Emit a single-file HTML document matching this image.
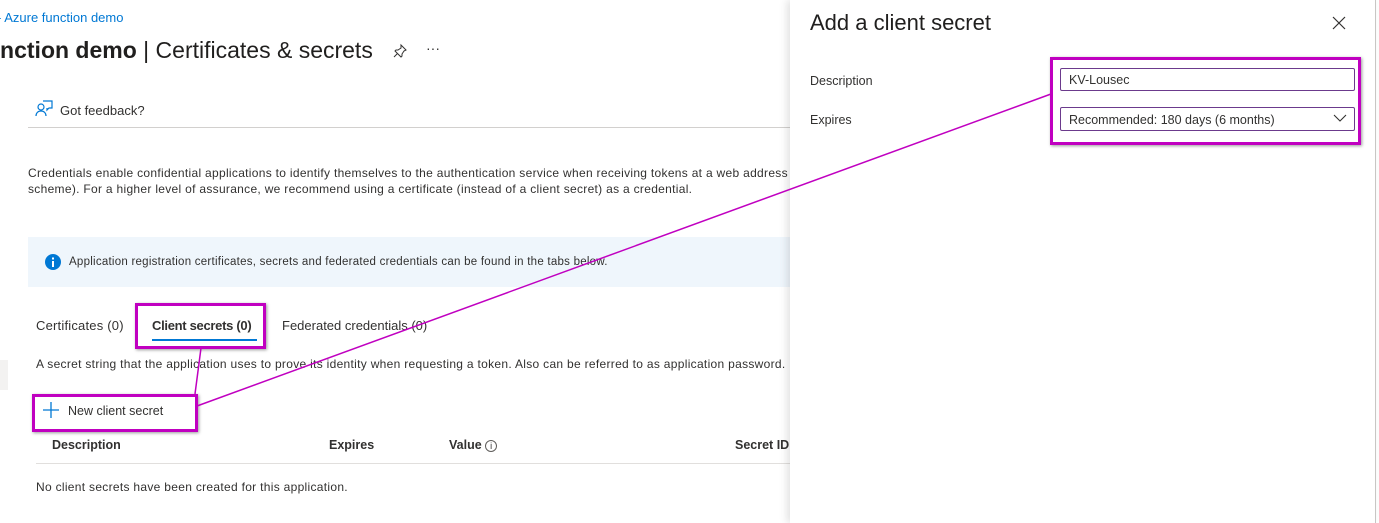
<!DOCTYPE html>
<html><head><meta charset="utf-8"><style>
*{margin:0;padding:0;box-sizing:border-box}
body{width:1379px;height:523px;overflow:hidden;background:#fff;font-family:"Liberation Sans",sans-serif;color:#323130;position:relative}
.a{position:absolute;white-space:nowrap}
.main{position:absolute;left:0;top:0;width:790px;height:523px;overflow:hidden}
.t{font-size:12px;letter-spacing:0.3px}
.box{position:absolute;border:3px solid #c000c0;box-shadow:1px 1px 3px rgba(0,0,0,.4)}
</style></head><body>
<div class="main">
<div class="a" style="left:-3px;top:10px;font-size:13px;color:#0078d4">- Azure function demo</div>
<div class="a" style="left:-14px;top:37px;font-size:23px;color:#201f1e"><b>unction demo</b> | Certificates &amp; secrets</div>
<svg class="a" style="left:392px;top:43px" width="16" height="16" viewBox="0 0 16 16"><path d="M9 2l5 5-2 1-2 3v2l-1 1-6-6 1-1h2l3-2z M5.5 10.5L2 14" fill="none" stroke="#323130" stroke-width="1"/></svg>
<div class="a" style="left:426px;top:40px;font-size:14px">···</div>
<svg class="a" style="left:35px;top:100px" width="18" height="18" viewBox="0 0 18 18"><circle cx="6" cy="7" r="3" fill="none" stroke="#0078d4" stroke-width="1.2"/><path d="M1 16c0-3 2-5 5-5s5 2 5 5M8 1h9v7h-3l-2 2V8" fill="none" stroke="#0078d4" stroke-width="1.2"/></svg>
<div class="a" style="left:60px;top:103px;font-size:13px">Got feedback?</div>
<div class="a" style="left:28px;top:127px;width:770px;height:1px;background:#d2d0ce"></div>
<div class="a t" style="left:28px;top:166px">Credentials enable confidential applications to identify themselves to the authentication service when receiving tokens at a web address</div>
<div class="a t" style="left:28px;top:182px">scheme). For a higher level of assurance, we recommend using a certificate (instead of a client secret) as a credential.</div>
<div class="a" style="left:28px;top:237px;width:770px;height:50px;background:#eff6fc"></div>
<svg class="a" style="left:45px;top:254px" width="16" height="16"><circle cx="8" cy="8" r="8" fill="#0078d4"/><rect x="7" y="7" width="2" height="6" fill="#fff"/><rect x="7" y="3.5" width="2" height="2" fill="#fff"/></svg>
<div class="a t" style="left:69px;top:256px;font-size:11.5px;letter-spacing:0.25px">Application registration certificates, secrets and federated credentials can be found in the tabs below.</div>
<div class="a" style="left:36px;top:318px;font-size:13px;letter-spacing:0.2px">Certificates (0)</div>
<div class="a" style="left:152px;top:318px;font-size:13px;font-weight:bold;letter-spacing:-0.3px">Client secrets (0)</div>
<div class="a" style="left:152px;top:339px;width:105px;height:2px;background:#0078d4"></div>
<div class="a" style="left:282px;top:318px;font-size:13px">Federated credentials (0)</div>
<div class="a t" style="left:36px;top:357px">A secret string that the application uses to prove its identity when requesting a token. Also can be referred to as application password.</div>
<div class="a" style="left:0;top:360px;width:8px;height:30px;background:#f3f2f1"></div>
<svg class="a" style="left:43px;top:402px" width="16" height="16"><path d="M8 0v16M0 8h16" stroke="#0078d4" stroke-width="1.3"/></svg>
<div class="a" style="left:68px;top:404px;font-size:12.5px">New client secret</div>
<div class="a" style="left:52px;top:438px;font-size:12.5px;font-weight:bold">Description</div>
<div class="a" style="left:329px;top:438px;font-size:12.5px;font-weight:bold">Expires</div>
<div class="a" style="left:449px;top:438px;font-size:12.5px;font-weight:bold">Value <span style="font-weight:normal;border:1px solid #605e5c;border-radius:50%;font-size:9px;display:inline-block;width:12px;height:12px;text-align:center;line-height:10px">i</span></div>
<div class="a" style="left:735px;top:438px;font-size:12.5px;font-weight:bold">Secret ID</div>
<div class="a" style="left:36px;top:463px;width:760px;height:1px;background:#e1dfdd"></div>
<div class="a t" style="left:36px;top:480px">No client secrets have been created for this application.</div>
</div>
<div class="a" style="left:790px;top:0;width:586px;height:523px;background:#fff;box-shadow:-3px 0 8px rgba(0,0,0,.12);border-right:1px solid #c8c6c4"></div>
<div class="a" style="left:810px;top:10px;font-size:22px;color:#201f1e">Add a client secret</div>
<svg class="a" style="left:1332px;top:16px" width="14" height="14"><path d="M1 1L13 13M13 1L1 13" stroke="#323130" stroke-width="1.2"/></svg>
<div class="a" style="left:810px;top:74px;font-size:12.5px">Description</div>
<div class="a" style="left:810px;top:113px;font-size:12.5px">Expires</div>
<div class="a" style="left:1060px;top:68px;width:295px;height:23px;border:1px solid #6b3a8c;border-radius:2px;font-size:12.5px;padding:4px 8px">KV-Lousec</div>
<div class="a" style="left:1060px;top:107px;width:295px;height:24px;border:1px solid #6b3a8c;border-radius:2px;font-size:12.5px;padding:5px 8px">Recommended: 180 days (6 months)</div>
<svg class="a" style="left:1333px;top:114px" width="14" height="9"><path d="M1 1l6 6 6-6" fill="none" stroke="#323130" stroke-width="1.1"/></svg>
<div class="box" style="left:1050px;top:57px;width:311px;height:88px"></div>
<div class="box" style="left:135px;top:303px;width:131px;height:46px"></div>
<div class="box" style="left:32px;top:394px;width:166px;height:38px"></div>
<svg class="a" style="left:0;top:0" width="1379" height="523"><path d="M201 348L195 394M197 406L1051 94" stroke="#c000c0" stroke-width="1.5" fill="none"/></svg>
</body></html>
